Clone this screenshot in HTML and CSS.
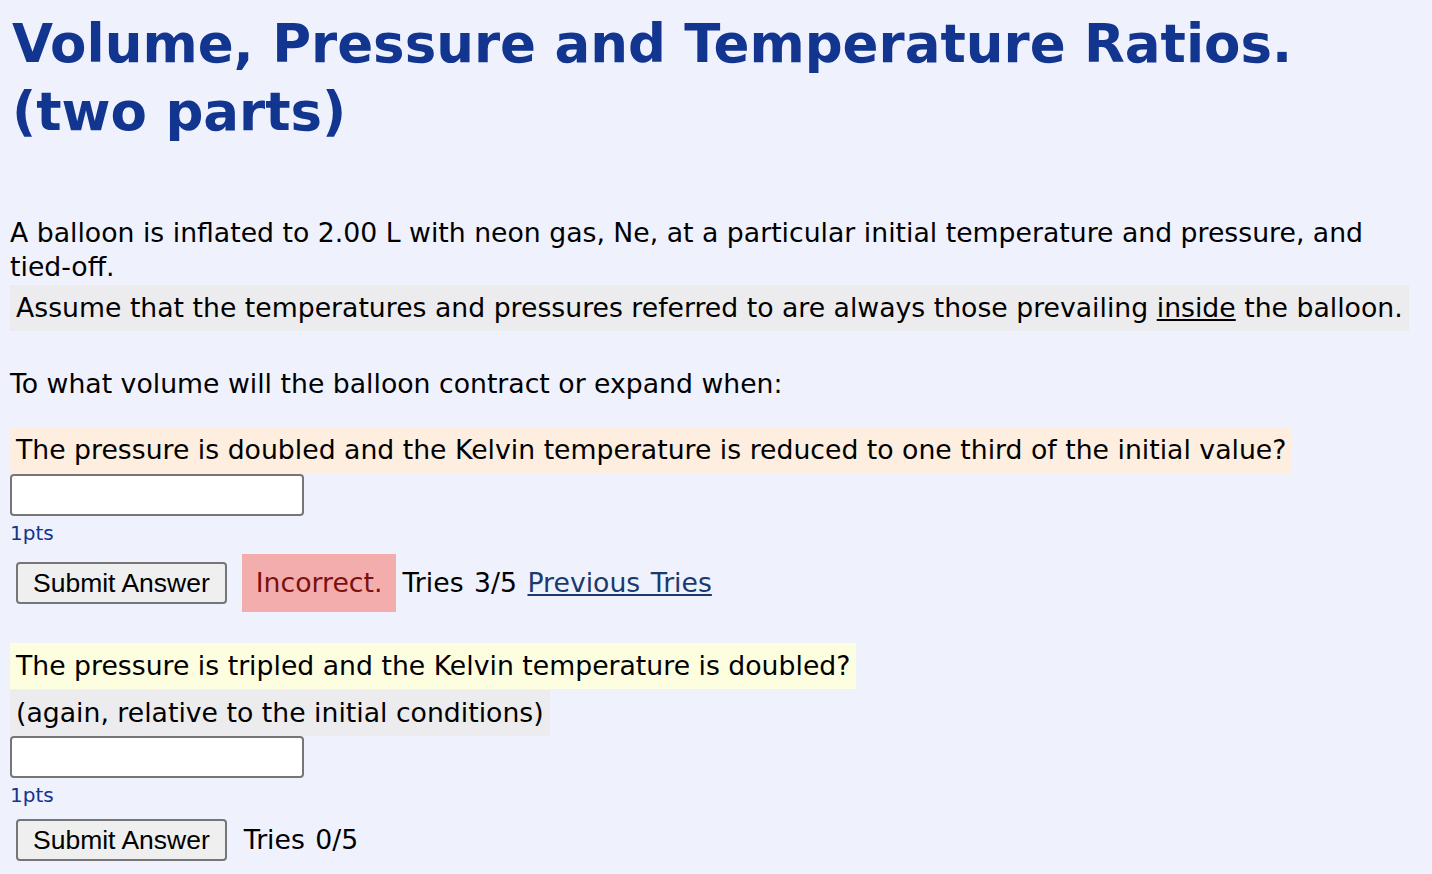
FILE: index.html
```html
<!DOCTYPE html>
<html lang="en">
<head>
  <meta charset="UTF-8" />
  <title>Volume, Pressure and Temperature Ratios</title>
  <link rel="stylesheet" href="styles.css">
</head>
<body>
  <h1 class="title">Volume, Pressure and Temperature Ratios.<br>(two parts)</h1>

  <p class="intro">A balloon is inflated to 2.00 L with neon gas, Ne, at a particular initial temperature and pressure, and <span class="nowrap">tied-off.</span></p>
  <div class="note">Assume that the temperatures and pressures referred to are always those prevailing <u>inside</u> the balloon.</div>

  <p class="lead">To what volume will the balloon contract or expand when:</p>

  <div class="part">
    <div class="question q-first">The pressure is doubled and the Kelvin temperature is reduced to one third of the initial value?</div>
    <input type="text" class="answer">
    <div class="pts">1pts</div>
    <div class="submit-row">
      <button class="btn">Submit Answer</button>
      <span class="incorrect">Incorrect.</span>
      <span class="tries">Tries 3/5 <a href="#">Previous Tries</a></span>
    </div>
  </div>

  <div class="part">
    <div class="question q-second">The pressure is tripled and the Kelvin temperature is doubled?</div>
    <div class="question hint">(again, relative to the initial conditions)</div>
    <input type="text" class="answer">
    <div class="pts">1pts</div>
    <div class="submit-row">
      <button class="btn">Submit Answer</button>
      <span class="tries">Tries 0/5</span>
    </div>
  </div>
</body>
</html>
```

FILE: styles.css
```css
body {
  margin: 0;
  padding: 0 10px;
  background: #eff1fd;
  color: #000;
  font-family: "DejaVu Sans", Verdana, sans-serif;
  font-size: 26.7px;
  line-height: 34px;
}

.title {
  margin: 10px 0 0;
  padding-left: 2px;
  font-size: 53px;
  line-height: 68px;
  font-weight: bold;
  color: #123590;
}

.intro {
  margin: 70px 0 0;
}

.nowrap {
  white-space: nowrap;
}

.note {
  display: inline-block;
  background: #ececee;
  padding: 6px 6px;
  margin-top: 1px;
}

.lead {
  margin: 36px 0 0;
}

.part {
  margin-top: 26px;
}

.part + .part {
  margin-top: 31px;
}

.question {
  display: table;
  padding: 6px 6px;
}

.q-first {
  background: #fdeee0;
}

.q-second {
  background: #fdfde0;
}

.hint {
  background: #ececee;
  margin-top: 1px;
}

.answer {
  display: block;
  box-sizing: border-box;
  width: 294px;
  height: 42px;
  margin: 1px 0 0;
  border: 2px solid #767676;
  border-radius: 4px;
  background: #fff;
}

.hint + .answer {
  margin-top: 0;
}

.pts {
  font-size: 20px;
  line-height: 26px;
  color: #123590;
  margin-top: 4px;
}

.submit-row {
  display: flex;
  align-items: center;
  margin-top: 8px;
}

.part + .part .submit-row {
  margin-top: 11px;
}

.btn {
  font-family: "Liberation Sans", Arial, sans-serif;
  font-size: 26.5px;
  height: 42px;
  padding: 0 15px;
  margin-left: 6px;
  background: #efefef;
  border: 2px solid #767676;
  border-radius: 4px;
  color: #000;
}

.incorrect {
  background: #f4adad;
  color: #7a1010;
  padding: 12px 14px;
  margin-left: 15px;
}

.tries {
  margin-left: 6px;
  word-spacing: 2px;
}

.submit-row .btn + .tries {
  margin-left: 17px;
}

.tries a {
  color: #1a3a6e;
}
```
